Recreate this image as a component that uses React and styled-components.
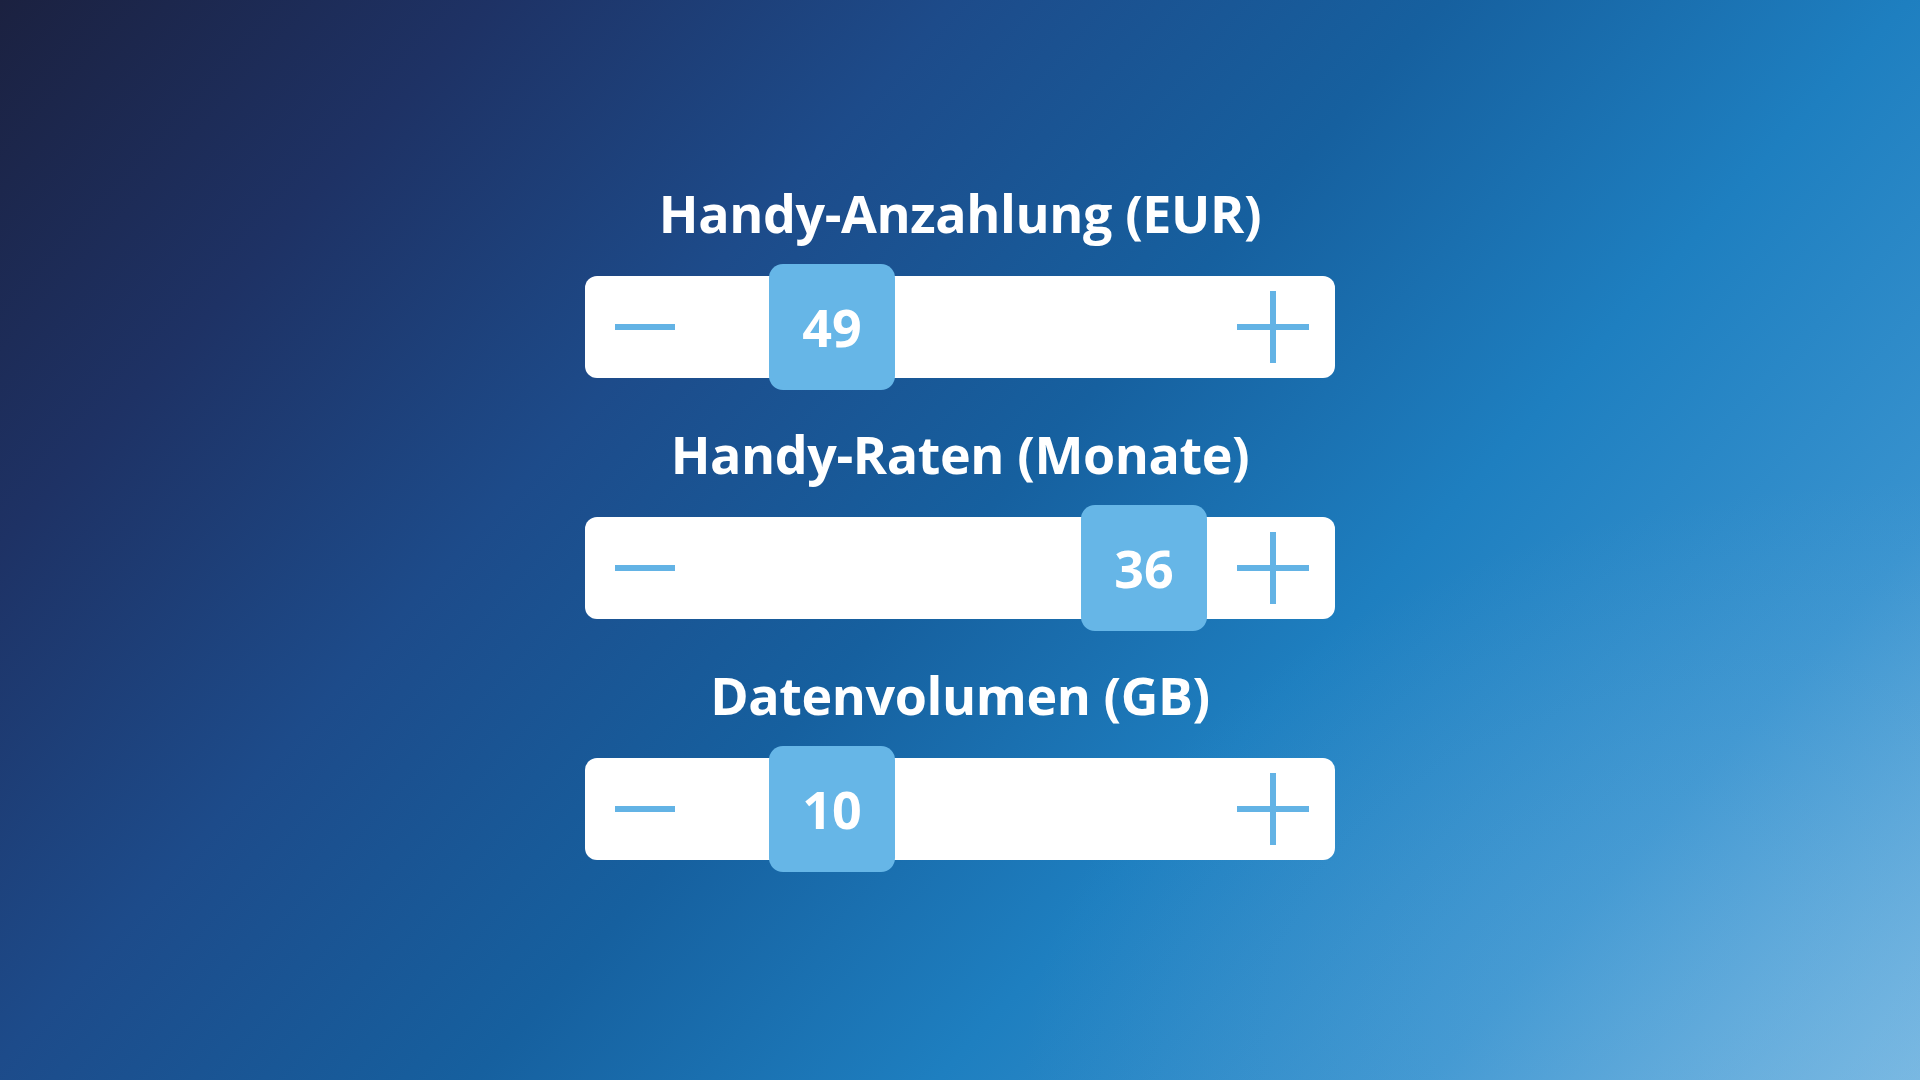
import React, { useState } from 'react';
import styled, { createGlobalStyle } from 'styled-components';

const GlobalStyle = createGlobalStyle`
  html, body {
    margin: 0;
    padding: 0;
  }
  body {
    font-family: 'Open Sans', 'Noto Sans', sans-serif;
    -webkit-font-smoothing: antialiased;
  }
`;

const Page = styled.div`
  width: 1920px;
  height: 1080px;
  box-sizing: border-box;
  padding-top: 183px;
  display: flex;
  flex-direction: column;
  align-items: center;
  gap: 46px;
  background:
    radial-gradient(ellipse 900px 600px at 100% 100%, rgba(130, 190, 230, 0.35), rgba(130, 190, 230, 0) 100%),
    linear-gradient(
      132deg,
      #1b2140 0%,
      #1e3265 17%,
      #1d4b8a 33%,
      #16609f 50%,
      #1e7fc0 66%,
      #3993cf 83%,
      #74b5e0 100%
    );
  overflow: hidden;
`;

const Block = styled.div`
  display: flex;
  flex-direction: column;
  align-items: center;
  gap: 33px;
`;

const Label = styled.div`
  font-size: 52px;
  line-height: 60px;
  font-weight: 700;
  color: #ffffff;
  letter-spacing: -0.4px;
  white-space: nowrap;
`;

const Track = styled.div`
  position: relative;
  width: 750px;
  height: 102px;
  box-sizing: border-box;
  padding: 0 26px 0 30px;
  background: #ffffff;
  border-radius: 12px;
  display: flex;
  align-items: center;
  justify-content: space-between;
`;

const StepButton = styled.button`
  border: none;
  background: none;
  padding: 0;
  width: ${p => p.$size}px;
  height: ${p => p.$size}px;
  display: flex;
  align-items: center;
  justify-content: center;
  cursor: pointer;
`;

// the handle sits over the white track and pokes out 12px above and below
const Thumb = styled.div`
  position: absolute;
  top: -12px;
  width: 126px;
  height: 126px;
  border-radius: 14px;
  background: #66b6e7;
  display: flex;
  align-items: center;
  justify-content: center;
  color: #ffffff;
  font-size: 52px;
  font-weight: 700;
  line-height: 1;
`;

const ICON = '#63b3e5';

const MinusIcon = () => (
  <svg width="60" height="60" viewBox="0 0 60 60">
    <rect x="0" y="27" width="60" height="6" fill={ICON} />
  </svg>
);

const PlusIcon = () => (
  <svg width="72" height="72" viewBox="0 0 72 72">
    <rect x="0" y="33" width="72" height="6" fill={ICON} />
    <rect x="33" y="0" width="6" height="72" fill={ICON} />
  </svg>
);

// left offset of the handle inside the track, per setting
const initialSliders = [
  { id: 'down', label: 'Handy-Anzahlung (EUR)', value: 49, min: 0, max: 199, offset: 184 },
  { id: 'months', label: 'Handy-Raten (Monate)', value: 36, min: 0, max: 48, offset: 496 },
  { id: 'data', label: 'Datenvolumen (GB)', value: 10, min: 0, max: 40, offset: 184 },
];

const Slider = ({ slider, onChange }) => {
  const step = (d) => {
    const next = Math.min(slider.max, Math.max(slider.min, slider.value + d));
    onChange(slider.id, next);
  };

  return (
    <Block>
      <Label>{slider.label}</Label>
      <Track>
        <StepButton $size={60} aria-label="weniger" onClick={() => step(-1)}>
          <MinusIcon />
        </StepButton>
        <StepButton $size={72} aria-label="mehr" onClick={() => step(1)}>
          <PlusIcon />
        </StepButton>
        <Thumb style={{ left: slider.offset }}>{slider.value}</Thumb>
      </Track>
    </Block>
  );
};

const App = () => {
  const [sliders, setSliders] = useState(initialSliders);

  const handleChange = (id, value) => {
    setSliders(prev => prev.map(s => (s.id === id ? { ...s, value } : s)));
  };

  return (
    <>
      <GlobalStyle />
      <Page>
        {sliders.map(s => (
          <Slider key={s.id} slider={s} onChange={handleChange} />
        ))}
      </Page>
    </>
  );
};

export default App;
